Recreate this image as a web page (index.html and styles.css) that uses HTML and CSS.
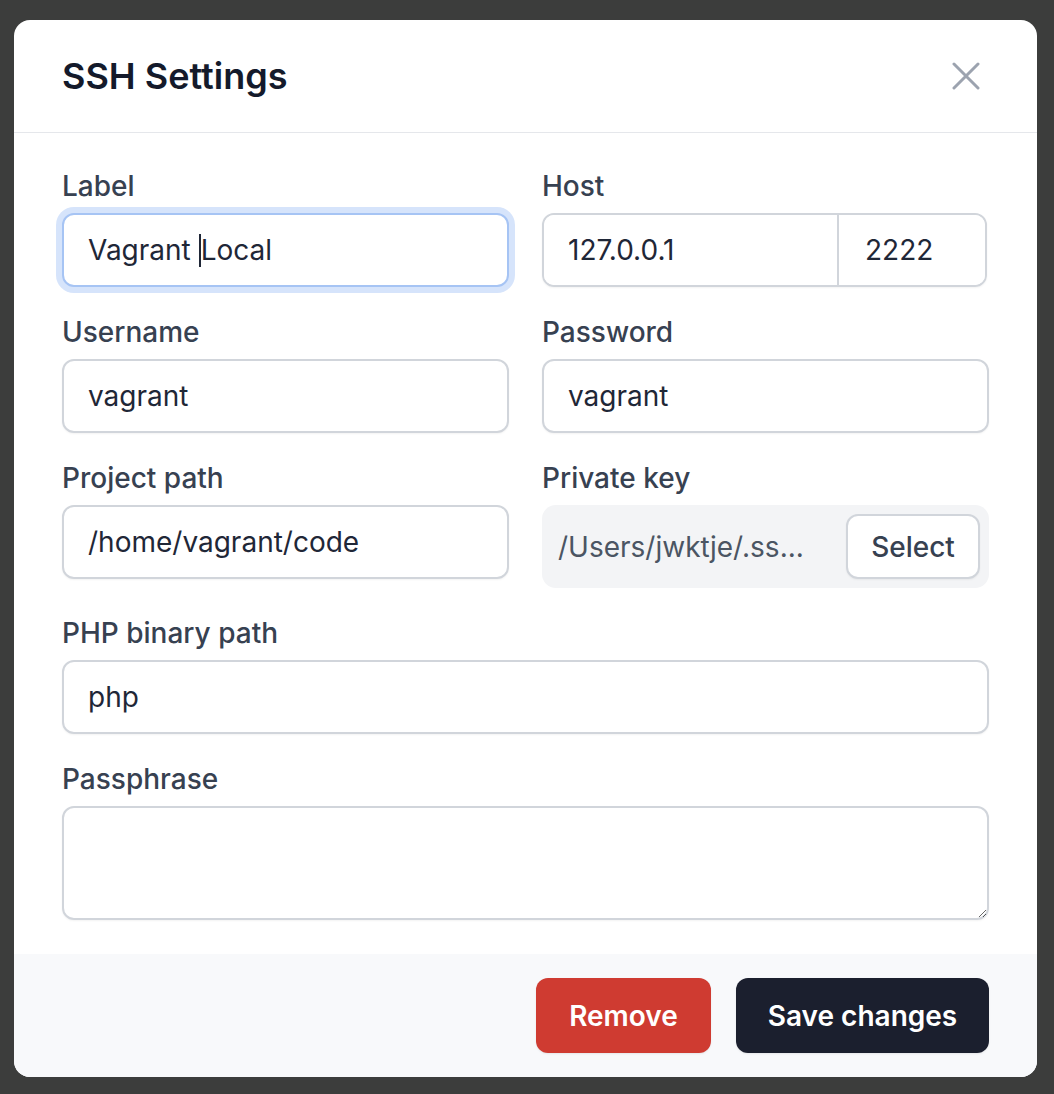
FILE: index.html
```html
<!DOCTYPE html>
<html lang="en">
<head>
<meta charset="utf-8">
<title>SSH Settings</title>
<link rel="stylesheet" href="styles.css">
</head>
<body>
<div class="backdrop">
  <div class="modal">
    <header class="modal-header">
      <h2 class="modal-title">SSH Settings</h2>
      <button class="close-btn" aria-label="Close">
        <svg viewBox="0 0 28 28" width="28" height="28" fill="none" stroke="#9ca3af" stroke-width="3" stroke-linecap="round"><path d="M2 2L26 26M26 2L2 26"/></svg>
      </button>
    </header>
    <div class="modal-body">
      <div class="grid">
        <div class="field">
          <label class="label">Label</label>
          <div class="input focused"><span class="value">Vagrant <span class="caret"></span>Local</span></div>
        </div>
        <div class="field">
          <label class="label">Host</label>
          <div class="input-group">
            <input class="group-part host" type="text" value="127.0.0.1">
            <input class="group-part port" type="text" value="2222">
          </div>
        </div>
        <div class="field">
          <label class="label">Username</label>
          <input class="input" type="text" value="vagrant">
        </div>
        <div class="field">
          <label class="label">Password</label>
          <input class="input" type="text" value="vagrant">
        </div>
        <div class="field">
          <label class="label">Project path</label>
          <input class="input" type="text" value="/home/vagrant/code">
        </div>
        <div class="field">
          <label class="label">Private key</label>
          <div class="file-box">
            <span class="file-path">/Users/jwktje/.ss...</span>
            <button class="select-btn">Select</button>
          </div>
        </div>
        <div class="field wide">
          <label class="label">PHP binary path</label>
          <input class="input" type="text" value="php">
        </div>
        <div class="field wide">
          <label class="label">Passphrase</label>
          <textarea class="input textarea"></textarea>
        </div>
      </div>
    </div>
    <footer class="modal-footer">
      <button class="btn btn-danger">Remove</button>
      <button class="btn btn-dark">Save changes</button>
    </footer>
  </div>
</div>
</body>
</html>
```

FILE: styles.css
```css
* { box-sizing: border-box; }

html, body {
  margin: 0;
  padding: 0;
  background: #3c3d3c;
  font-family: Inter, "Noto Sans", "Liberation Sans", sans-serif;
}

.backdrop {
  padding: 20px 17px 17px 14px;
}

.modal {
  width: 1023px;
  background: #ffffff;
  border-radius: 16px;
  overflow: hidden;
}

.modal-header {
  height: 113px;
  border-bottom: 1px solid #e5e7eb;
  display: flex;
  align-items: center;
  justify-content: space-between;
  padding: 0 57px 0 48px;
}

.modal-title {
  margin: 0;
  font-size: 36px;
  font-weight: 600;
  color: #141a2b;
}

.close-btn {
  background: none;
  border: none;
  padding: 0;
  width: 28px;
  height: 28px;
  display: flex;
  cursor: pointer;
}

.modal-body {
  padding: 33px 48px 34px;
}

.grid {
  display: grid;
  grid-template-columns: 1fr 1fr;
  column-gap: 33px;
  row-gap: 25px;
}

.field {
  display: flex;
  flex-direction: column;
}

.field.wide {
  grid-column: 1 / -1;
}

.label {
  font-size: 28px;
  line-height: 40px;
  font-weight: 500;
  color: #374151;
  margin-bottom: 7px;
}

.input {
  height: 74px;
  width: 100%;
  border: 2px solid #d1d5db;
  border-radius: 12px;
  padding: 0 24px;
  font-family: inherit;
  font-size: 28px;
  color: #1f2737;
  background: #ffffff;
  box-shadow: 0 1px 2px rgba(0, 0, 0, 0.05);
  outline: none;
  display: flex;
  align-items: center;
}

.input.focused {
  border-color: #a6c4f4;
  box-shadow: 0 0 0 6px #d6e4fb;
}

.value {
  white-space: pre;
}

.caret {
  display: inline-block;
  width: 2px;
  height: 33px;
  background: #1f2737;
  vertical-align: -7px;
}

.input-group {
  display: flex;
  height: 74px;
  width: 445px;
  border: 2px solid #d1d5db;
  border-radius: 12px;
  overflow: hidden;
  box-shadow: 0 1px 2px rgba(0, 0, 0, 0.05);
}

.group-part {
  border: none;
  outline: none;
  font-family: inherit;
  font-size: 28px;
  color: #1f2737;
  background: #ffffff;
  height: 100%;
  padding: 0 24px;
  min-width: 0;
}

.group-part.host {
  flex: 0 0 295px;
  border-right: 2px solid #d1d5db;
}

.group-part.port {
  flex: 1;
  padding-left: 26px;
}

.file-box {
  height: 83px;
  background: #f3f4f6;
  border-radius: 14px;
  display: flex;
  align-items: center;
  justify-content: space-between;
  padding: 0 9px 0 16px;
}

.file-path {
  font-size: 28px;
  color: #4b5563;
  white-space: nowrap;
}

.select-btn {
  height: 65px;
  width: 134px;
  background: #ffffff;
  border: 2px solid #d1d5db;
  border-radius: 12px;
  font-family: inherit;
  font-size: 28px;
  font-weight: 500;
  color: #374151;
  box-shadow: 0 1px 2px rgba(0, 0, 0, 0.05);
}

.textarea {
  height: 114px;
  resize: vertical;
  display: block;
  padding: 16px 24px;
}

.modal-footer {
  background: #f8f9fb;
  padding: 24px 48px;
  display: flex;
  justify-content: flex-end;
  gap: 25px;
}

.btn {
  height: 75px;
  border: none;
  border-radius: 12px;
  font-family: inherit;
  font-size: 28px;
  font-weight: 600;
  color: #ffffff;
  padding: 0 20px;
  white-space: nowrap;
  box-shadow: 0 1px 2px rgba(0, 0, 0, 0.08);
}

.btn-danger {
  background: #cf3b31;
  width: 175px;
}

.btn-dark {
  background: #1b1f2e;
  width: 253px;
}
```
